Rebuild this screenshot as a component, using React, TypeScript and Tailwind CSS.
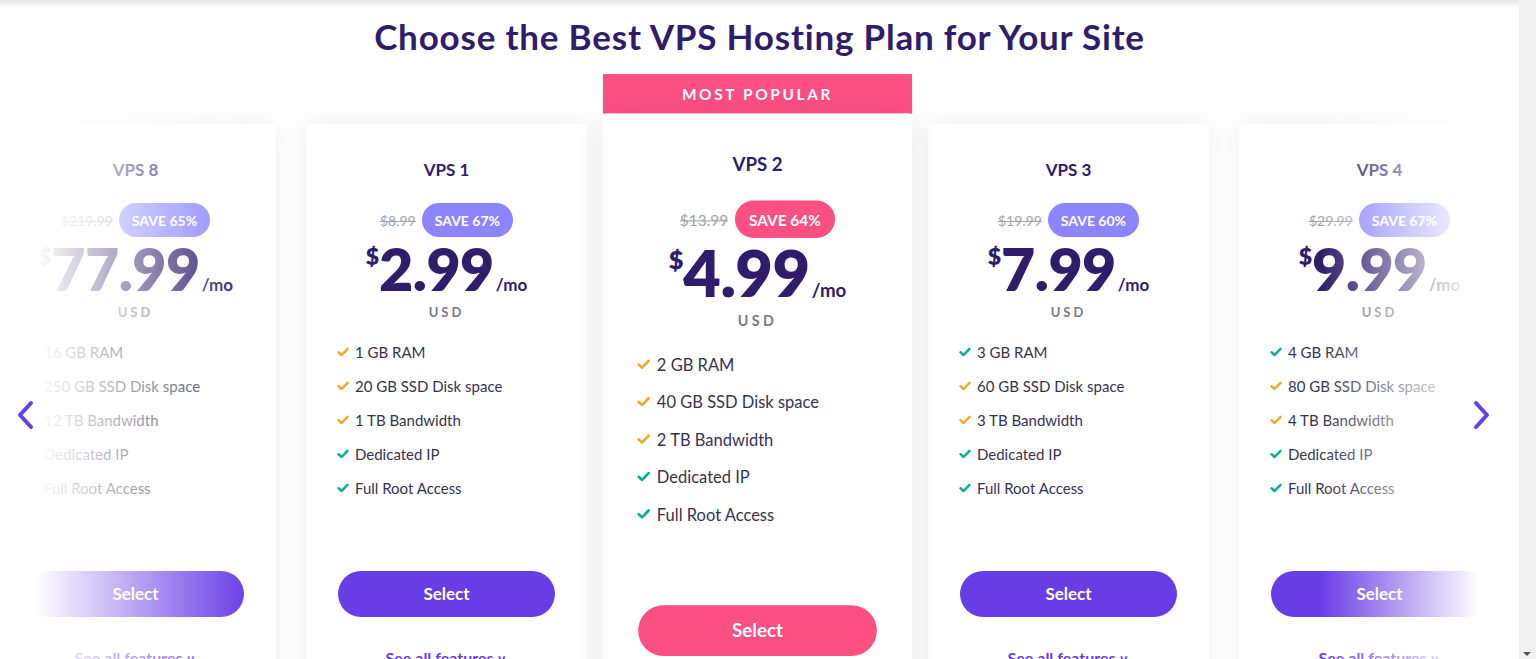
import React from "react";

type Plan = {
  name: string;
  old: string;
  save: string;
  price: string;
  features: { text: string; tone: "orange" | "green" }[];
};

const feat = (ram: string, disk: string, bw: string, first: "orange" | "green") => [
  { text: ram, tone: first },
  { text: disk, tone: "orange" as const },
  { text: bw, tone: "orange" as const },
  { text: "Dedicated IP", tone: "green" as const },
  { text: "Full Root Access", tone: "green" as const },
];

const plans: Plan[] = [
  { name: "VPS 8", old: "$219.99", save: "SAVE 65%", price: "77.99", features: feat("16 GB RAM", "250 GB SSD Disk space", "12 TB Bandwidth", "green") },
  { name: "VPS 1", old: "$8.99", save: "SAVE 67%", price: "2.99", features: feat("1 GB RAM", "20 GB SSD Disk space", "1 TB Bandwidth", "orange") },
  { name: "VPS 2", old: "$13.99", save: "SAVE 64%", price: "4.99", features: feat("2 GB RAM", "40 GB SSD Disk space", "2 TB Bandwidth", "orange") },
  { name: "VPS 3", old: "$19.99", save: "SAVE 60%", price: "7.99", features: feat("3 GB RAM", "60 GB SSD Disk space", "3 TB Bandwidth", "green") },
  { name: "VPS 4", old: "$29.99", save: "SAVE 67%", price: "9.99", features: feat("4 GB RAM", "80 GB SSD Disk space", "4 TB Bandwidth", "green") },
];

const Check = ({ tone }: { tone: "orange" | "green" }) => (
  <svg width="12" height="10" viewBox="0 0 12 10" className="shrink-0">
    <path
      d="M1.5 5.2 L4.6 8 L10.5 1.8"
      fill="none"
      stroke={tone === "orange" ? "#f5a623" : "#00b090"}
      strokeWidth="2.4"
      strokeLinecap="round"
      strokeLinejoin="round"
    />
  </svg>
);

const Card = ({ plan, popular }: { plan: Plan; popular?: boolean }) => (
  <div className="h-[600px] w-[281px] shrink-0 rounded-[4px] bg-white shadow-[0_0_28px_rgba(20,20,40,0.07)]">
    <div className="pt-[34px] text-center text-[17px] leading-[24px] font-bold text-[#2f1c6a]">{plan.name}</div>
    <div className="mt-[21px] flex items-center justify-center gap-[6px]">
      <span className="text-[14px] text-[#a3a3ad] line-through">{plan.old}</span>
      <span
        className={
          popular
            ? "flex h-[34px] items-center rounded-full bg-[#fc4f82] px-[13px] text-[14px] font-bold text-white"
            : "flex h-[34px] items-center rounded-full bg-[#8c85ff] px-[13px] text-[14px] font-bold text-white"
        }
      >
        {plan.save}
      </span>
    </div>
    <div className="mt-[3px] flex items-start justify-center text-[#2f1c6a]">
      <span className="mt-[5px] text-[23px] leading-none font-extrabold">$</span>
      <span className="flex items-baseline">
        <span className="text-[59px] leading-[58px] font-extrabold tracking-[-0.5px]">{plan.price}</span>
        <span className="ml-[2px] text-[17px] font-bold">/mo</span>
      </span>
    </div>
    <div className="mt-[6px] text-center text-[13px] leading-[16px] font-bold tracking-[3px] text-[#7a7a8c]">USD</div>
    <ul className="mt-[22px] flex flex-col gap-[14px] px-[31px]">
      {plan.features.map((f) => (
        <li key={f.text} className="flex items-center gap-[6px] text-[15px] leading-[20px] text-[#36344d]">
          <Check tone={f.tone} />
          {f.text}
        </li>
      ))}
    </ul>
    <div className="mt-[73px] px-[32px]">
      <button
        className={
          popular
            ? "h-[46px] w-full rounded-full bg-[#fc4f82] text-[17px] font-bold text-white"
            : "h-[46px] w-full rounded-full bg-[#673de6] text-[17px] font-bold text-white"
        }
      >
        Select
      </button>
    </div>
    <div className="mt-[31px] text-center text-[16px] leading-[20px] font-bold text-[#673de6]">
      See all features <span className="text-[13px]">∨</span>
    </div>
  </div>
);

const Chevron = ({ dir }: { dir: "left" | "right" }) => (
  <svg width="20" height="30" viewBox="0 0 20 30">
    <path
      d={dir === "left" ? "M15 3 L4 15 L15 27" : "M5 3 L16 15 L5 27"}
      fill="none"
      stroke="#673de6"
      strokeWidth="4"
      strokeLinecap="round"
      strokeLinejoin="round"
    />
  </svg>
);

export default function App() {
  return (
    <div className="flex h-[659px] w-[1536px] overflow-hidden bg-white font-['Lato',sans-serif]">
      <div className="flex w-[1519px] shrink-0 flex-col overflow-hidden">
        <div className="h-[8px] shrink-0 bg-gradient-to-b from-[#e6e6ea] to-white" />
        <h1 className="mt-[8px] shrink-0 text-center text-[35px] leading-[40px] font-bold tracking-[0.8px] text-[#2f1c6a]">
          Choose the Best VPS Hosting Plan for Your Site
        </h1>
        <div className="relative mt-[18px] shrink-0">
          <div className="ml-[-5px] flex items-start gap-[30px]">
            <div className="mt-[50px]"><Card plan={plans[0]} /></div>
            <div className="mt-[50px]"><Card plan={plans[1]} /></div>
            <div className="mt-[14px] origin-[50%_140px] scale-[1.1]">
              <div className="flex h-[36px] items-center justify-center bg-[#fc4f82] text-[14px] font-bold tracking-[2.4px] text-white">
                MOST POPULAR
              </div>
              <Card plan={plans[2]} popular />
            </div>
            <div className="mt-[50px]"><Card plan={plans[3]} /></div>
            <div className="mt-[50px]"><Card plan={plans[4]} /></div>
          </div>
          <div className="pointer-events-none absolute top-0 bottom-0 left-0 w-[250px] bg-gradient-to-r from-white from-[14%] to-transparent" />
          <div className="pointer-events-none absolute top-0 right-0 bottom-0 w-[200px] bg-gradient-to-l from-white from-[20%] to-transparent" />
          <button className="absolute top-[326px] left-[16px]"><Chevron dir="left" /></button>
          <button className="absolute top-[326px] left-[1471px]"><Chevron dir="right" /></button>
        </div>
      </div>
      <div className="relative w-[17px] shrink-0 bg-[#f1f1f1]">
        <div className="absolute bottom-[3px] left-[4px] h-0 w-0 border-x-[4px] border-t-[4px] border-x-transparent border-t-[#505050]" />
      </div>
    </div>
  );
}
